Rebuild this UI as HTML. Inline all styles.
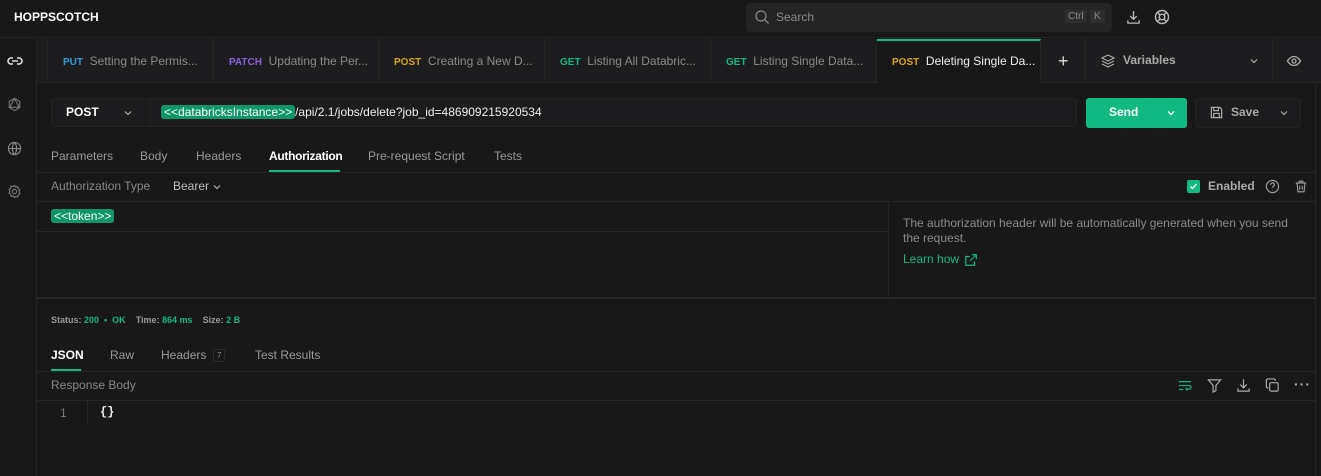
<!DOCTYPE html>
<html><head><meta charset="utf-8"><style>
*{box-sizing:border-box;margin:0;padding:0}
body{width:1321px;height:476px;background:#181818;font-family:"Liberation Sans",sans-serif;color:#ccc;position:relative;overflow:hidden;font-size:12px}
.a{position:absolute}
.t{white-space:nowrap}
svg{display:block}
.tab{position:absolute;top:39px;height:44px;border-right:1px solid #262626;padding:15px 0 0 15px;white-space:nowrap;overflow:hidden}
.tab b{font-size:10px}
.tab span{color:#8a8a8a}
</style></head><body>
<!-- header -->
<div class="a" style="left:0;top:0;width:1321px;height:38px;background:#181818;border-bottom:1px solid #242424"></div>
<div class="a t" style="left:14px;top:10px;font-weight:bold;color:#fff;font-size:12px">HOPPSCOTCH</div>
<div class="a" style="left:746px;top:3px;width:366px;height:29px;background:#242424;border-radius:4px"></div>
<svg class="a" style="left:754px;top:9px" width="16" height="16" viewBox="0 0 16 16" fill="none" stroke="#888" stroke-width="1.3"><circle cx="7" cy="7" r="5"/><path d="M11 11l3.5 3.5"/></svg>
<div class="a t" style="left:776px;top:10px;color:#8a8a8a">Search</div>
<div class="a t" style="left:1065px;top:10px;color:#888;font-size:10px;background:#2e2e2e;padding:1px 3px;border-radius:2px">Ctrl</div>
<div class="a t" style="left:1090px;top:10px;color:#888;font-size:10px;background:#2e2e2e;padding:1px 4px;border-radius:2px">K</div>
<svg class="a" style="left:1126px;top:10px" width="15" height="15" viewBox="0 0 16 16" fill="none" stroke="#bbb" stroke-width="1.4"><path d="M8 1v9M4.5 6.5L8 10l3.5-3.5M2 11v3h12v-3"/></svg>
<svg class="a" style="left:1154px;top:9px" width="16" height="16" viewBox="0 0 16 16" fill="none" stroke="#bbb" stroke-width="1.4"><circle cx="8" cy="8" r="6.5"/><circle cx="8" cy="8" r="2.8"/><path d="M3.4 3.4l2.6 2.6M12.6 3.4L10 6M3.4 12.6L6 10M12.6 12.6L10 10"/></svg>
<!-- sidebar -->
<div class="a" style="left:0;top:39px;width:37px;height:437px;border-right:1px solid #262626"></div>
<svg class="a" style="left:7px;top:53px" width="16" height="16" viewBox="0 0 16 16" fill="none" stroke="#ddd" stroke-width="1.6"><path d="M6 5H4a3 3 0 000 6h2M10 5h2a3 3 0 010 6h-2M5 8h6"/></svg>
<svg class="a" style="left:7px;top:97px" width="15" height="15" viewBox="0 0 16 16" fill="none" stroke="#777" stroke-width="1.2"><path d="M8 1.5l5.6 3.2v6.6L8 14.5l-5.6-3.2V4.7z M8 1.5L3 11h10z"/></svg>
<svg class="a" style="left:7px;top:141px" width="15" height="15" viewBox="0 0 16 16" fill="none" stroke="#888" stroke-width="1.2"><circle cx="8" cy="8" r="6.5"/><path d="M1.5 8h13M8 1.5c-3 3.5-3 9.5 0 13M8 1.5c3 3.5 3 9.5 0 13"/></svg>
<svg class="a" style="left:7px;top:184px" width="15" height="15" viewBox="0 0 16 16" fill="none" stroke="#777" stroke-width="1.2"><circle cx="8" cy="8" r="2.3"/><path d="M8 1.5l1.3 1.8 2.2-.5.5 2.2 1.8 1.3-1 2 1 2-1.8 1.3-.5 2.2-2.2-.5L8 14.5l-1.3-1.8-2.2.5-.5-2.2L2.2 9.7l1-2-1-2 1.8-1.3.5-2.2 2.2.5z"/></svg>
<!-- tab bar -->
<div class="a" style="left:37px;top:39px;width:1284px;height:44px;background:#1d1d1f;border-bottom:1px solid #262626"></div>
<div class="a" style="left:37px;top:39px;width:11px;height:44px;border-right:1px solid #262626"></div>
<div class="tab" style="left:48px;width:166px"><b style="color:#2b9ee0">PUT</b>&nbsp; <span>Setting the Permis...</span></div>
<div class="tab" style="left:214px;width:165px"><b style="color:#8d5fe0">PATCH</b>&nbsp; <span>Updating the Per...</span></div>
<div class="tab" style="left:379px;width:166px"><b style="color:#d9a40a">POST</b>&nbsp; <span>Creating a New D...</span></div>
<div class="tab" style="left:545px;width:166px"><b style="color:#10b981">GET</b>&nbsp; <span>Listing All Databric...</span></div>
<div class="tab" style="left:711px;width:166px"><b style="color:#10b981">GET</b>&nbsp; <span>Listing Single Data...</span></div>
<div class="tab" style="left:877px;width:164px;background:#181818;border-top:2px solid #10b981;padding-top:13px"><b style="color:#d9a40a">POST</b>&nbsp; <span style="color:#eee">Deleting Single Da...</span></div>
<div class="a" style="left:1041px;top:39px;width:45px;height:44px;border-right:1px solid #262626"></div>
<div class="a" style="left:1058px;top:53px;color:#ddd;font-size:18px;line-height:16px">+</div>
<svg class="a" style="left:1100px;top:53px" width="16" height="16" viewBox="0 0 16 16" fill="none" stroke="#aaa" stroke-width="1.2"><path d="M8 2l6 3-6 3-6-3z M2 8l6 3 6-3 M2 11l6 3 6-3"/></svg>
<div class="a t" style="left:1123px;top:53px;color:#aaa;font-weight:bold">Variables</div>
<svg class="a" style="left:1249px;top:56px" width="10" height="10" viewBox="0 0 10 10" fill="none" stroke="#aaa" stroke-width="1.2"><path d="M2 3.5l3 3 3-3"/></svg>
<div class="a" style="left:1272px;top:39px;height:44px;border-left:1px solid #262626"></div>
<svg class="a" style="left:1286px;top:53px" width="16" height="16" viewBox="0 0 16 16" fill="none" stroke="#aaa" stroke-width="1.3"><path d="M1.5 8s2.5-4.5 6.5-4.5S14.5 8 14.5 8 12 12.5 8 12.5 1.5 8 1.5 8z"/><circle cx="8" cy="8" r="2"/></svg>
<!-- right border -->
<div class="a" style="left:1315px;top:83px;height:393px;border-left:1px solid #262626"></div>
<!-- url row -->
<div class="a" style="left:51px;top:98px;width:1026px;height:29px;background:#1c1c1e;border:1px solid #242424;border-radius:4px"></div>
<div class="a" style="left:150px;top:98px;height:29px;border-left:1px solid #242424"></div>
<div class="a t" style="left:66px;top:105px;color:#fff;font-weight:bold">POST</div>
<svg class="a" style="left:123px;top:108px" width="10" height="10" viewBox="0 0 10 10" fill="none" stroke="#aaa" stroke-width="1.2"><path d="M2 3.5l3 3 3-3"/></svg>
<div class="a t" style="left:161px;top:105px;color:#eee"><span style="background:#0e9668;color:#fff;border-radius:3px;padding:0 3px">&lt;&lt;databricksInstance&gt;&gt;</span>/api/2.1/jobs/delete?job_id=486909215920534</div>
<div class="a" style="left:1086px;top:98px;width:101px;height:30px;background:#10b981;border-radius:3px"></div>
<div class="a t" style="left:1109px;top:105px;color:#fff;font-weight:bold">Send</div>
<svg class="a" style="left:1166px;top:108px" width="10" height="10" viewBox="0 0 10 10" fill="none" stroke="#fff" stroke-width="1.3"><path d="M2 3.5l3 3 3-3"/></svg>
<div class="a" style="left:1195px;top:98px;width:106px;height:30px;background:#1c1c1e;border:1px solid #242424;border-radius:3px"></div>
<svg class="a" style="left:1209px;top:105px" width="15" height="15" viewBox="0 0 16 16" fill="none" stroke="#aaa" stroke-width="1.3"><path d="M2.5 2.5h9l2 2v9h-11z M5 2.5v3.5h5V2.5 M5 13.5V9h6v4.5"/></svg>
<div class="a t" style="left:1231px;top:105px;color:#aaa;font-weight:bold">Save</div>
<svg class="a" style="left:1279px;top:108px" width="10" height="10" viewBox="0 0 10 10" fill="none" stroke="#aaa" stroke-width="1.2"><path d="M2 3.5l3 3 3-3"/></svg>
<!-- request tabs -->
<div class="a t" style="left:51px;top:149px;color:#999">Parameters</div>
<div class="a t" style="left:140px;top:149px;color:#999">Body</div>
<div class="a t" style="left:196px;top:149px;color:#999">Headers</div>
<div class="a t" style="left:269px;top:149px;color:#fff;font-weight:bold;letter-spacing:-0.3px">Authorization</div>
<div class="a t" style="left:368px;top:149px;color:#999">Pre-request Script</div>
<div class="a t" style="left:494px;top:149px;color:#999">Tests</div>
<div class="a" style="left:269px;top:170px;width:71px;height:2px;background:#10b981"></div>
<div class="a" style="left:37px;top:172px;width:1278px;border-top:1px solid #262626"></div>
<div class="a t" style="left:51px;top:179px;color:#888">Authorization Type</div>
<div class="a t" style="left:173px;top:179px;color:#bbb">Bearer</div>
<svg class="a" style="left:212px;top:182px" width="10" height="10" viewBox="0 0 10 10" fill="none" stroke="#aaa" stroke-width="1.2"><path d="M2 3.5l3 3 3-3"/></svg>
<div class="a" style="left:1187px;top:180px;width:13px;height:13px;background:#10b981;border-radius:2px"></div>
<svg class="a" style="left:1188px;top:181px" width="11" height="11" viewBox="0 0 11 11" fill="none" stroke="#fff" stroke-width="1.3"><path d="M2.5 5.5l2 2 4-4.5"/></svg>
<div class="a t" style="left:1208px;top:179px;color:#aaa;font-weight:bold">Enabled</div>
<svg class="a" style="left:1265px;top:179px" width="15" height="15" viewBox="0 0 16 16" fill="none" stroke="#999" stroke-width="1.3"><circle cx="8" cy="8" r="6.5"/><path d="M6 6.2a2 2 0 113 1.7c-.7.4-1 .8-1 1.6M8 11.5v.5"/></svg>
<svg class="a" style="left:1294px;top:179px" width="14" height="15" viewBox="0 0 16 16" fill="none" stroke="#999" stroke-width="1.3"><path d="M2 4h12M6 4V2h4v2M3.5 4l1 10h7l1-10M6.5 7v4.5M9.5 7v4.5"/></svg>
<div class="a" style="left:37px;top:201px;width:1278px;border-top:1px solid #262626"></div>
<div class="a t" style="left:51px;top:209px;background:#0e9668;color:#fff;border-radius:3px;padding:0 3px;font-size:12px;line-height:14px">&lt;&lt;token&gt;&gt;</div>
<div class="a" style="left:37px;top:231px;width:851px;border-top:1px solid #262626"></div>
<div class="a" style="left:888px;top:201px;height:96px;border-left:1px solid #262626"></div>
<div class="a" style="left:903px;top:216px;width:390px;color:#8a8a8a;font-size:12px;line-height:15px">The authorization header will be automatically generated when you send the request.</div>
<div class="a t" style="left:903px;top:252px;color:#10b981">Learn how</div>
<svg class="a" style="left:964px;top:253px" width="14" height="14" viewBox="0 0 16 16" fill="none" stroke="#10b981" stroke-width="1.4"><path d="M9 2h5v5M14 2L7 9M12 9.5V14H2V4h4.5"/></svg>
<div class="a" style="left:37px;top:297px;width:1278px;border-top:2px solid #262626"></div>
<!-- status -->
<div class="a t" style="left:51px;top:315px;font-size:9px;color:#999;font-weight:bold">Status: <span style="color:#10b981">200 &nbsp;•&nbsp; OK</span> &nbsp;&nbsp;&nbsp;Time: <span style="color:#10b981">864 ms</span> &nbsp;&nbsp;&nbsp;Size: <span style="color:#10b981">2 B</span></div>
<div class="a t" style="left:51px;top:348px;color:#fff;font-weight:bold">JSON</div>
<div class="a t" style="left:110px;top:348px;color:#999">Raw</div>
<div class="a t" style="left:161px;top:348px;color:#999">Headers</div>
<div class="a t" style="left:213px;top:349px;font-size:8px;border:1px solid #2a2a2a;border-radius:2px;padding:1px 3px;color:#888">7</div>
<div class="a t" style="left:255px;top:348px;color:#999">Test Results</div>
<div class="a" style="left:51px;top:369px;width:30px;height:2px;background:#10b981"></div>
<div class="a" style="left:37px;top:371px;width:1278px;border-top:1px solid #262626"></div>
<div class="a t" style="left:51px;top:378px;color:#888">Response Body</div>
<svg class="a" style="left:1178px;top:379px" width="14" height="14" viewBox="0 0 16 16" fill="none" stroke="#10b981" stroke-width="1.3"><path d="M1 3h14M1 7.5h12a2 2 0 010 4H9M10.5 10l-1.5 1.5 1.5 1.5M1 12h5"/></svg>
<svg class="a" style="left:1207px;top:378px" width="15" height="15" viewBox="0 0 16 16" fill="none" stroke="#aaa" stroke-width="1.3"><path d="M1.5 2h13L9.5 8v5.5l-3 1.5V8z"/></svg>
<svg class="a" style="left:1236px;top:378px" width="15" height="15" viewBox="0 0 16 16" fill="none" stroke="#aaa" stroke-width="1.3"><path d="M8 1.5v9M4.5 7L8 10.5 11.5 7M2 11v3h12v-3"/></svg>
<svg class="a" style="left:1265px;top:378px" width="15" height="15" viewBox="0 0 16 16" fill="none" stroke="#aaa" stroke-width="1.3"><rect x="5" y="5" width="9" height="9" rx="1.5"/><path d="M11 3V2.5A1.5 1.5 0 009.5 1H3A1.5 1.5 0 001.5 2.5V9A1.5 1.5 0 003 10.5h.5"/></svg>
<div class="a t" style="left:1294px;top:376px;color:#aaa;font-size:14px;font-weight:bold;letter-spacing:1px">···</div>
<div class="a" style="left:37px;top:400px;width:1278px;border-top:1px solid #262626"></div>
<div class="a" style="left:87px;top:401px;height:23px;border-left:1px solid #262626"></div>
<div class="a t" style="left:60px;top:406px;color:#777">1</div>
<div class="a t" style="left:100px;top:405px;color:#eee;font-weight:bold;font-family:'Liberation Mono',monospace">{}</div>
</body></html>
